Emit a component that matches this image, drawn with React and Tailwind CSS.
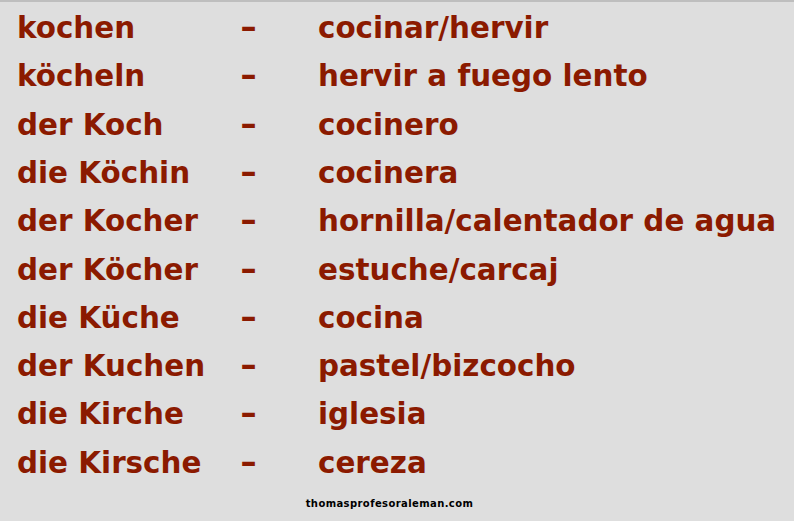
import React from "react";

const rows = [
  ["kochen", "cocinar/hervir"],
  ["köcheln", "hervir a fuego lento"],
  ["der Koch", "cocinero"],
  ["die Köchin", "cocinera"],
  ["der Kocher", "hornilla/calentador de agua"],
  ["der Köcher", "estuche/carcaj"],
  ["die Küche", "cocina"],
  ["der Kuchen", "pastel/bizcocho"],
  ["die Kirche", "iglesia"],
  ["die Kirsche", "cereza"],
];

export default function App() {
  return (
    <div className="w-[794px] h-[521px] bg-[#dedede] border-t-2 border-[#bebebe] overflow-hidden flex flex-col">
      <div
        className="flex flex-col pt-[2px] text-[#8b1a00] font-bold text-[29.4px]"
        style={{ fontFamily: '"DejaVu Sans", sans-serif' }}
      >
        {rows.map(([de, es]) => (
          <div key={de} className="grid grid-cols-[240px_78px_1fr] h-[48.3px] items-center">
            <span className="pl-[17px] whitespace-nowrap">{de}</span>
            <span className="scale-x-[1.4] origin-left inline-block">-</span>
            <span className="whitespace-nowrap">{es}</span>
          </div>
        ))}
      </div>
      <div
        className="mt-[9px] pr-[15px] text-center text-[10px] font-bold text-black tracking-[0.4px]"
        style={{ fontFamily: '"DejaVu Sans", sans-serif' }}
      >
        thomasprofesoraleman.com
      </div>
    </div>
  );
}
